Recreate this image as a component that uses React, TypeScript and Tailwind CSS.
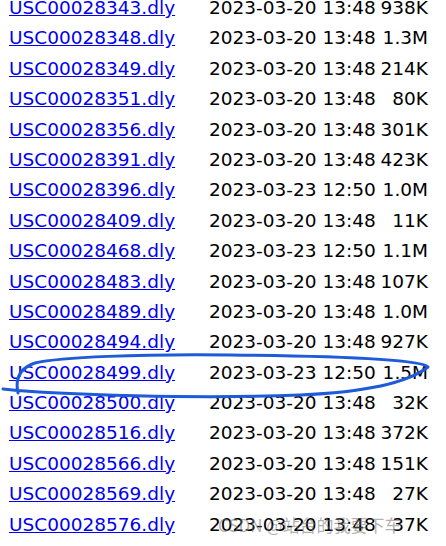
import React from "react";

const files = [
  ["USC00028343.dly", "2023-03-20 13:48", "938K"],
  ["USC00028348.dly", "2023-03-20 13:48", "1.3M"],
  ["USC00028349.dly", "2023-03-20 13:48", "214K"],
  ["USC00028351.dly", "2023-03-20 13:48", "80K"],
  ["USC00028356.dly", "2023-03-20 13:48", "301K"],
  ["USC00028391.dly", "2023-03-20 13:48", "423K"],
  ["USC00028396.dly", "2023-03-23 12:50", "1.0M"],
  ["USC00028409.dly", "2023-03-20 13:48", "11K"],
  ["USC00028468.dly", "2023-03-23 12:50", "1.1M"],
  ["USC00028483.dly", "2023-03-20 13:48", "107K"],
  ["USC00028489.dly", "2023-03-20 13:48", "1.0M"],
  ["USC00028494.dly", "2023-03-20 13:48", "927K"],
  ["USC00028499.dly", "2023-03-23 12:50", "1.5M"],
  ["USC00028500.dly", "2023-03-20 13:48", "32K"],
  ["USC00028516.dly", "2023-03-20 13:48", "372K"],
  ["USC00028566.dly", "2023-03-20 13:48", "151K"],
  ["USC00028569.dly", "2023-03-20 13:48", "27K"],
  ["USC00028576.dly", "2023-03-20 13:48", "37K"],
];

export default function App() {
  return (
    <div className="relative w-[446px] h-[546px] overflow-hidden bg-white font-['DejaVu_Sans',sans-serif] text-[18.5px] leading-[30.4px] text-black">
      <div className="-mt-[7px]">
        {files.map(([name, date, size]) => (
          <div key={name} className="flex h-[30.4px] pl-[9px] pr-[18px] whitespace-nowrap">
            <a href="#" className="w-[200px] text-[#0000f0] underline">
              {name}
            </a>
            <span className="flex-1">{date}</span>
            <span className="text-right">{size}</span>
          </div>
        ))}
      </div>

      {/* hand-drawn highlight */}
      <svg
        className="absolute inset-0 pointer-events-none"
        width="446"
        height="546"
        viewBox="0 0 446 546"
        fill="none"
      >
        <path
          d="M3 389 C60 395 200 399 300 395 C370 392 410 381 428 367 C420 359 330 356 230 355 C140 354 60 357 35 363 C20 368 15 379 18 393"
          stroke="#1d5bd8"
          strokeWidth={3}
          strokeLinecap="round"
          strokeLinejoin="round"
        />
      </svg>

      <div className="absolute left-[218px] top-[513px] font-['Noto_Sans_CJK_SC',sans-serif] text-[17px] leading-[24px] text-[rgba(110,110,110,0.55)] whitespace-nowrap">
        CSDN @站台的我要下车
      </div>
    </div>
  );
}
